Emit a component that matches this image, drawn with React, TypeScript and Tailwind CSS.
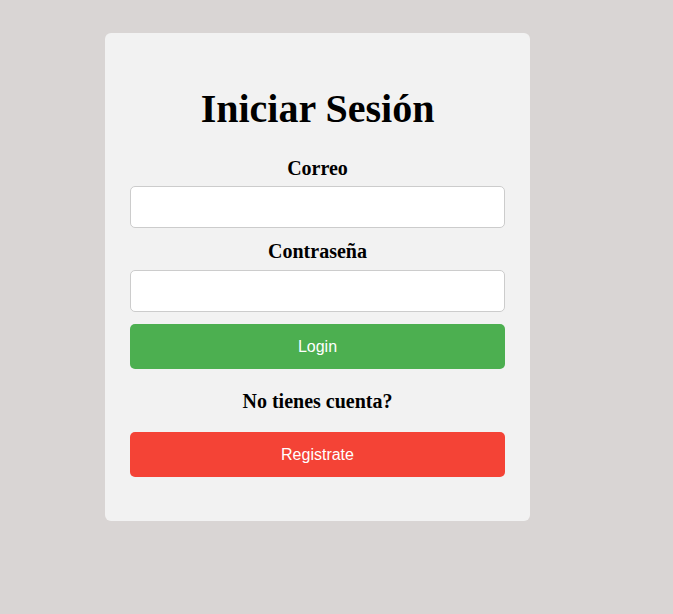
export default function App() {
  return (
    <div className="min-h-[614px] w-full bg-[#d9d5d4] pt-[33px] pl-[105px] font-['Liberation_Serif',serif]">
      <div className="w-[425px] rounded-[6px] bg-[#f2f2f2] px-[25px] pt-[53px] pb-[44px] text-black">
        <h1 className="text-center text-[40px] font-bold leading-[46px]">Iniciar Sesión</h1>

        <form className="mt-[25px] flex flex-col" onSubmit={(e) => e.preventDefault()}>
          <label htmlFor="correo" className="text-center text-[20px] font-bold leading-[22px]">
            Correo
          </label>
          <input
            id="correo"
            type="email"
            className="mt-[7px] h-[42px] w-full rounded-[5px] border border-[#cccccc] bg-white px-[10px] outline-none"
          />

          <label htmlFor="password" className="mt-[12px] text-center text-[20px] font-bold leading-[22px]">
            Contraseña
          </label>
          <input
            id="password"
            type="password"
            className="mt-[8px] h-[42px] w-full rounded-[5px] border border-[#cccccc] bg-white px-[10px] outline-none"
          />

          <button
            type="submit"
            className="mt-[12px] h-[45px] w-full rounded-[5px] bg-[#4caf50] font-['Liberation_Sans',Arial,sans-serif] text-[16px] text-white"
          >
            Login
          </button>
        </form>

        <p className="mt-[21px] text-center text-[20px] font-bold leading-[22px]">No tienes cuenta?</p>

        <button
          type="button"
          className="mt-[20px] h-[45px] w-full rounded-[5px] bg-[#f44336] font-['Liberation_Sans',Arial,sans-serif] text-[16px] text-white"
        >
          Registrate
        </button>
      </div>
    </div>
  )
}
